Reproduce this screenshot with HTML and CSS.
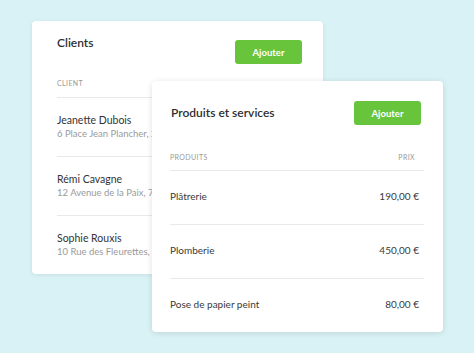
FILE: index.html
```html
<!DOCTYPE html>
<html lang="fr">
<head>
  <meta charset="UTF-8" />
  <title>Clients et produits</title>
  <link rel="stylesheet" href="styles.css">
</head>
<body>

<div class="stage">

  <div class="card clients">
    <div class="card-head">
      <h2>Clients</h2>
      <button>Ajouter</button>
    </div>
    <div class="col-head">Client</div>
    <div class="client">
      <div class="name">Jeanette Dubois</div>
      <div class="address">6 Place Jean Plancher, 2</div>
    </div>
    <div class="client">
      <div class="name">Rémi Cavagne</div>
      <div class="address">12 Avenue de la Paix, 720</div>
    </div>
    <div class="client">
      <div class="name">Sophie Rouxis</div>
      <div class="address">10 Rue des Fleurettes, 90</div>
    </div>
  </div>

  <div class="card products">
    <div class="card-head">
      <h2>Produits et services</h2>
      <button>Ajouter</button>
    </div>
    <div class="col-head">
      <span>Produits</span>
      <span class="price-col">Prix</span>
    </div>
    <div class="product">
      <span>Plâtrerie</span>
      <span class="price">190,00 €</span>
    </div>
    <div class="product">
      <span>Plomberie</span>
      <span class="price">450,00 €</span>
    </div>
    <div class="product">
      <span>Pose de papier peint</span>
      <span class="price">80,00 €</span>
    </div>
  </div>

</div>

</body>
</html>
```

FILE: styles.css
```css
body {
  font-family: 'Lato', 'Noto Sans', sans-serif;
  background-color: #d9f2f6;
  margin: 0;
  padding: 0;
  color: #333;
}

.stage {
  position: relative;
  width: 474px;
  height: 353px;
  overflow: hidden;
}

.card {
  background: white;
  border-radius: 4px;
  box-shadow: 0 1px 4px rgba(0, 0, 0, 0.08);
  box-sizing: border-box;
  width: 291px;
}

.card-head {
  display: flex;
  justify-content: space-between;
}

h2 {
  margin: 0;
  font-size: 12px;
  font-weight: 600;
  line-height: 16px;
  color: #2f2f2f;
}

button {
  font-family: inherit;
  background-color: #68c43a;
  color: white;
  border: none;
  border-radius: 3px;
  width: 67px;
  height: 24px;
  padding: 0;
  font-size: 9.5px;
  font-weight: 700;
  cursor: pointer;
}

.col-head {
  font-size: 7px;
  line-height: 10px;
  letter-spacing: 0.4px;
  text-transform: uppercase;
  color: #999;
  border-bottom: 1px solid #e9e9e9;
}

/* Clients */

.clients {
  margin: 21px 0 0 32px;
  height: 253px;
  padding: 0 21px 0 25px;
  overflow: hidden;
}

.clients .card-head {
  align-items: flex-start;
  padding-top: 14px;
}

.clients button {
  margin-top: 5px;
}

.clients .col-head {
  margin-top: 14px;
  padding-bottom: 9px;
  margin-right: -21px;
}

.client {
  padding: 15px 0;
  border-bottom: 1px solid #e9e9e9;
  white-space: nowrap;
  margin-right: -21px;
}

.client:last-child {
  border-bottom: none;
}

.name {
  font-size: 10.5px;
  line-height: 14px;
  color: #333;
}

.address {
  font-size: 9.5px;
  line-height: 14px;
  color: #9a9a9a;
}

/* Produits */

.products {
  position: absolute;
  left: 152px;
  top: 81px;
  height: 251px;
  padding: 0 19px 0 18px;
  box-shadow: 0 1px 6px rgba(0, 0, 0, 0.12);
}

.products .card-head {
  align-items: center;
  padding-top: 20px;
  margin-right: 3px;
}

.products h2 {
  margin-left: 1px;
}

.products .col-head {
  display: flex;
  justify-content: space-between;
  margin-top: 27px;
  padding-bottom: 8px;
}

.price-col {
  padding-right: 9px;
}

.product {
  display: flex;
  justify-content: space-between;
  font-size: 10px;
  line-height: 14px;
  padding: 18px 0 21px;
  color: #3a3a3a;
  border-bottom: 1px solid #e9e9e9;
}

.product:last-child {
  border-bottom: none;
}

.price {
  padding-right: 5px;
}
```
